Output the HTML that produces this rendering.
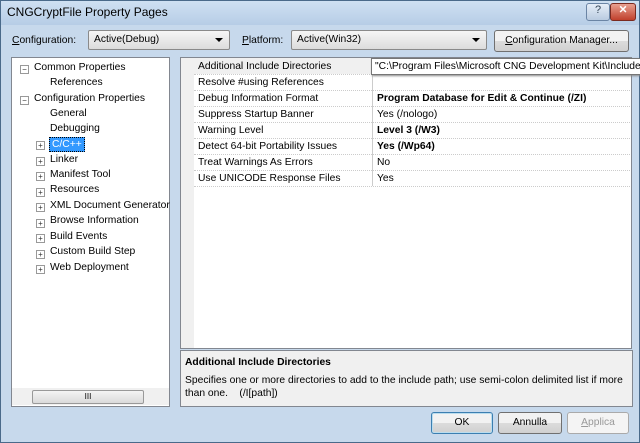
<!DOCTYPE html>
<html><head><style>
body{margin:0;width:640px;height:443px;overflow:hidden;font-family:"Liberation Sans",sans-serif;font-size:10.3px;color:#000}
.win{position:absolute;left:0;top:0;width:638px;height:441px;border:1px solid #4a6a8a;background:#c7d9ec}
.title{position:absolute;left:0;top:0;width:638px;height:24px;background:linear-gradient(#cfe0f2,#b7cde6)}
.title span{position:absolute;left:6px;top:4px;font-size:12px}
.client{position:absolute;left:6px;top:25px;width:626px;height:410px;background:#f0f0f0;border:1px solid #8ea4bd}
.a{position:absolute;white-space:nowrap}
.combo{position:absolute;height:18px;border:1px solid #8a8a8a;background:linear-gradient(#f6f6f6,#dcdcdc);border-radius:2px}
.combo span{position:absolute;left:5px;top:3px}
.combo i{position:absolute;right:6px;top:7px;border:4px solid transparent;border-top:4px solid #000;border-bottom:0}
.btn{position:absolute;height:20px;border:1px solid #707070;border-radius:3px;background:linear-gradient(#f2f2f2 50%,#dcdcdc 50%,#d0d0d0);text-align:center;line-height:20px}
.panel{position:absolute;background:#fff;border:1px solid #828790}
.row{position:absolute;left:13px;width:436px;height:16px;border-bottom:1px dotted #ccc}
.row span{position:absolute;left:4px;top:3px}
.row b{position:absolute;left:183px;top:3px}
.row em{position:absolute;left:183px;top:3px;font-style:normal}
.pm{position:absolute;width:7px;height:7px;border:1px solid #999;background:#fff;font-size:8px;line-height:7px;text-align:center;color:#333}
</style></head><body>
<div class="win">
<div class="title"><span>CNGCryptFile Property Pages</span>
<div class="a" style="left:585px;top:2px;width:22px;height:16px;border:1px solid #6b85a5;border-radius:3px;background:linear-gradient(#e6eef8,#b9cbe0);text-align:center;font-size:11px;color:#345">?</div>
<div class="a" style="left:609px;top:2px;width:24px;height:16px;border:1px solid #7a2a20;border-radius:3px;background:linear-gradient(#e8a090,#c0402c);text-align:center;color:#fff;font-weight:bold">✕</div>
</div>
</div>
<div class="a" style="left:12px;top:35px"><u>C</u>onfiguration:</div>
<div class="combo" style="left:88px;top:30px;width:140px"><span>Active(Debug)</span><i></i></div>
<div class="a" style="left:242px;top:35px"><u>P</u>latform:</div>
<div class="combo" style="left:291px;top:30px;width:194px"><span>Active(Win32)</span><i></i></div>
<div class="btn" style="left:494px;top:30px;width:133px"><u>C</u>onfiguration Manager...</div>

<div class="panel" style="left:11px;top:57px;width:157px;height:348px">
<div class="pm" style="left:8px;top:7px">−</div><div class="a" style="left:22px;top:4px">Common Properties</div>
<div class="a" style="left:38px;top:19px">References</div>
<div class="pm" style="left:8px;top:38px">−</div><div class="a" style="left:22px;top:35px">Configuration Properties</div>
<div class="a" style="left:38px;top:50px">General</div>
<div class="a" style="left:38px;top:65px">Debugging</div>
<div class="pm" style="left:24px;top:83px">+</div><div class="a" style="left:37px;top:79px;background:#3399ff;color:#fff;padding:1px 2px;border:1px dotted #000">C/C++</div>
<div class="pm" style="left:24px;top:99px">+</div><div class="a" style="left:38px;top:96px">Linker</div>
<div class="pm" style="left:24px;top:114px">+</div><div class="a" style="left:38px;top:111px">Manifest Tool</div>
<div class="pm" style="left:24px;top:130px">+</div><div class="a" style="left:38px;top:126px">Resources</div>
<div class="pm" style="left:24px;top:145px">+</div><div class="a" style="left:38px;top:142px">XML Document Generator</div>
<div class="pm" style="left:24px;top:161px">+</div><div class="a" style="left:38px;top:157px">Browse Information</div>
<div class="pm" style="left:24px;top:176px">+</div><div class="a" style="left:38px;top:173px">Build Events</div>
<div class="pm" style="left:24px;top:192px">+</div><div class="a" style="left:38px;top:188px">Custom Build Step</div>
<div class="pm" style="left:24px;top:207px">+</div><div class="a" style="left:38px;top:204px">Web Deployment</div>
<div class="a" style="left:0;top:330px;width:157px;height:17px;background:#f0f0f0"></div>
<div class="a" style="left:20px;top:332px;width:110px;height:12px;border:1px solid #999;border-radius:2px;background:linear-gradient(#f4f4f4,#dadada);text-align:center;font-size:8px;line-height:12px">III</div>
</div>

<div class="panel" style="left:180px;top:57px;width:450px;height:290px">
<div class="a" style="left:0;top:0;width:13px;height:290px;background:#f0f0f0"></div>
<div class="a" style="left:13px;top:0;width:179px;height:16px;background:#f0f0f0"></div>
<div class="a" style="left:191px;top:0;width:1px;height:128px;background:#ccc"></div>
<div class="row" style="top:0"><span>Additional Include Directories</span></div>
<div class="row" style="top:16px"><span>Resolve #using References</span></div>
<div class="row" style="top:32px"><span>Debug Information Format</span><b>Program Database for Edit &amp; Continue (/ZI)</b></div>
<div class="row" style="top:48px"><span>Suppress Startup Banner</span><em>Yes (/nologo)</em></div>
<div class="row" style="top:64px"><span>Warning Level</span><b>Level 3 (/W3)</b></div>
<div class="row" style="top:80px"><span>Detect 64-bit Portability Issues</span><b>Yes (/Wp64)</b></div>
<div class="row" style="top:96px"><span>Treat Warnings As Errors</span><em>No</em></div>
<div class="row" style="top:112px"><span>Use UNICODE Response Files</span><em>Yes</em></div>
</div>
<div class="a" style="left:371px;top:58px;width:269px;height:15px;background:#fff;border:1px solid #767676;box-shadow:1px 1px 2px #888;overflow:hidden;padding-left:3px;line-height:15px">"C:\Program Files\Microsoft CNG Development Kit\Include</div>

<div class="a" style="left:180px;top:350px;width:451px;height:55px;border:1px solid #828790;background:#f0f0f0">
<div class="a" style="left:4px;top:6px;font-weight:bold">Additional Include Directories</div>
<div class="a" style="left:4px;top:24px">Specifies one or more directories to add to the include path; use semi-colon delimited list if more</div>
<div class="a" style="left:4px;top:37px">than one.&nbsp;&nbsp;&nbsp;&nbsp;(/I[path])</div>
</div>

<div class="btn" style="left:431px;top:412px;width:60px;border-color:#3c7fb1;box-shadow:inset 0 0 0 1px #bde">OK</div>
<div class="btn" style="left:498px;top:412px;width:62px">Annulla</div>
<div class="btn" style="left:567px;top:412px;width:60px;color:#999;border-color:#aaa;background:#f4f4f4"><u>A</u>pplica</div>
</body></html>
